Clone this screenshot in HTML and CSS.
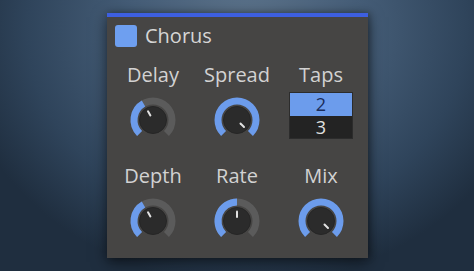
FILE: index.html
```html
<!DOCTYPE html>
<html>
<head>
<meta charset="utf-8">
<link rel="stylesheet" href="styles.css">
</head>
<body>
<div class="stage">
  <div class="panel">
    <div class="header">
      <span class="check"></span>
      <span class="title">Chorus</span>
    </div>
    <div class="grid">
      <div class="cell">
        <div class="label">Delay</div>
        <svg class="knob" width="48" height="48" viewBox="0 0 48 48">
          <path class="track" d="M10.56 37.44 A19 19 0 1 1 37.44 37.44"/>
          <path class="fill" d="M10.56 37.44 A19 19 0 0 1 14.5 7.55"/>
          <circle class="cap" cx="24" cy="24" r="13.5"/>
          <line class="ind" x1="21.4" y1="19.5" x2="19" y2="15.3"/>
        </svg>
      </div>
      <div class="cell">
        <div class="label">Spread</div>
        <svg class="knob" width="48" height="48" viewBox="0 0 48 48">
          <path class="fill" d="M10.56 37.44 A19 19 0 1 1 37.44 37.44"/>
          <circle class="cap" cx="24" cy="24" r="13.5"/>
          <line class="ind" x1="27.5" y1="27.5" x2="31" y2="31"/>
        </svg>
      </div>
      <div class="cell">
        <div class="label">Taps</div>
        <div class="taps">
          <div class="tap on">2</div>
          <div class="tap">3</div>
        </div>
      </div>
      <div class="cell">
        <div class="label">Depth</div>
        <svg class="knob" width="48" height="48" viewBox="0 0 48 48">
          <path class="track" d="M10.56 37.44 A19 19 0 1 1 37.44 37.44"/>
          <path class="fill" d="M10.56 37.44 A19 19 0 0 1 14.5 7.55"/>
          <circle class="cap" cx="24" cy="24" r="13.5"/>
          <line class="ind" x1="21.4" y1="19.5" x2="19" y2="15.3"/>
        </svg>
      </div>
      <div class="cell">
        <div class="label">Rate</div>
        <svg class="knob" width="48" height="48" viewBox="0 0 48 48">
          <path class="track" d="M10.56 37.44 A19 19 0 1 1 37.44 37.44"/>
          <path class="fill" d="M10.56 37.44 A19 19 0 0 1 24 5"/>
          <circle class="cap" cx="24" cy="24" r="13.5"/>
          <line class="ind" x1="24" y1="20" x2="24" y2="14.5"/>
        </svg>
      </div>
      <div class="cell">
        <div class="label">Mix</div>
        <svg class="knob" width="48" height="48" viewBox="0 0 48 48">
          <path class="fill" d="M10.56 37.44 A19 19 0 1 1 37.44 37.44"/>
          <circle class="cap" cx="24" cy="24" r="13.5"/>
          <line class="ind" x1="27.5" y1="27.5" x2="31" y2="31"/>
        </svg>
      </div>
    </div>
  </div>
</div>
</body>
</html>
```

FILE: styles.css
```css
html, body {
  margin: 0;
  padding: 0;
}
body {
  width: 474px;
  height: 271px;
  overflow: hidden;
  font-family: "Open Sans", "DejaVu Sans", sans-serif;
}
.stage {
  width: 474px;
  height: 271px;
  box-sizing: border-box;
  padding: 13px 0 0 107px;
  background: radial-gradient(ellipse 62% 95% at 52% 10%, #5d748c 0%, #455d77 40%, #2f445b 75%, #1f2e3f 100%);
}
.panel {
  width: 261px;
  height: 245px;
  box-sizing: border-box;
  background: #464544;
  border-top: 4px solid #3d5fe0;
  box-shadow: 0 4px 14px rgba(0, 0, 0, 0.55), 2px 0 6px rgba(0,0,0,0.25);
}
.header {
  display: flex;
  align-items: center;
  padding: 8px 0 0 8px;
  gap: 8px;
  height: 22px;
}
.check {
  width: 22px;
  height: 22px;
  border-radius: 3px;
  background: #6e9ff0;
}
.title {
  color: #d6d6d6;
  font-size: 20px;
  line-height: 22px;
}
.grid {
  display: grid;
  grid-template-columns: repeat(3, 84px);
  grid-auto-rows: 101px;
  padding: 16px 5px 0 4px;
}
.cell {
  display: flex;
  flex-direction: column;
  align-items: center;
}
.label {
  color: #d2d2d2;
  font-size: 20px;
  line-height: 24px;
  height: 24px;
}
.knob {
  margin-top: 9px;
  display: block;
}
.knob path {
  fill: none;
  stroke-width: 7;
}
.track { stroke: #5b5b5b; }
.fill { stroke: #6c9cec; }
.cap { fill: #2b2b2b; stroke: #262626; stroke-width: 1; }
.ind { stroke: #e2e2e2; stroke-width: 2; stroke-linecap: round; }
.taps {
  margin-top: 5px;
  width: 64px;
  border: 1px solid #2c2c2c;
  box-sizing: border-box;
}
.tap {
  height: 22px;
  line-height: 22px;
  text-align: center;
  font-size: 18px;
  background: #232323;
  color: #e0e0e0;
}
.tap.on {
  height: 23px;
  line-height: 23px;
  background: #6c9cec;
  color: #1a2c5a;
}
```
